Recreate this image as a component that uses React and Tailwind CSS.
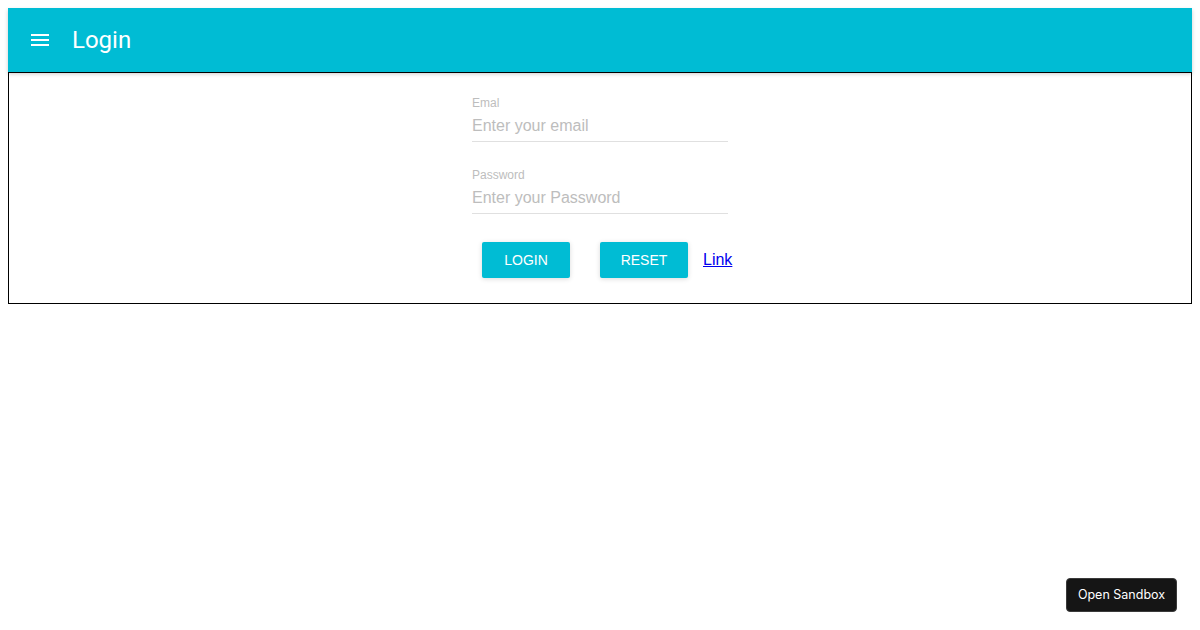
import React from "react";

export default function App() {
  return (
    <div className="min-h-[630px] bg-white p-2 relative">
      <header className="h-16 bg-[#00bcd4] flex items-center px-5 shadow-[0_2px_4px_rgba(0,0,0,0.2)] relative z-10">
        <svg width="24" height="24" viewBox="0 0 24 24" className="fill-white">
          <path d="M3 18h18v-2H3v2zm0-5h18v-2H3v2zm0-7v2h18V6H3z" />
        </svg>
        <h1 className="ml-5 text-white text-[24px] font-normal font-['Roboto',sans-serif] leading-none">Login</h1>
      </header>
      <div className="border border-black h-[232px] font-['Liberation_Sans',Arial,sans-serif]">
        <div className="w-64 mx-auto pt-[23px]">
          <div>
            <div className="text-[12px] text-[#bdbdbd] leading-[14px]">Emal</div>
            <input
              placeholder="Enter your email"
              className="w-full h-[32px] text-[16px] text-[#333] placeholder:text-[#bdbdbd] border-b border-[#e0e0e0] outline-none bg-transparent"
            />
          </div>
          <div className="mt-[26px]">
            <div className="text-[12px] text-[#bdbdbd] leading-[14px]">Password</div>
            <input
              placeholder="Enter your Password"
              type="password"
              className="w-full h-[32px] text-[16px] text-[#333] placeholder:text-[#bdbdbd] border-b border-[#e0e0e0] outline-none bg-transparent"
            />
          </div>
          <div className="flex items-center mt-[28px] pl-[10px]">
            <button className="shrink-0 w-[88px] h-9 bg-[#00bcd4] text-white text-[14px] rounded-[2px] shadow-[0_1px_5px_rgba(0,0,0,0.15)]">LOGIN</button>
            <button className="shrink-0 ml-[30px] w-[88px] h-9 bg-[#00bcd4] text-white text-[14px] rounded-[2px] shadow-[0_1px_5px_rgba(0,0,0,0.15)]">RESET</button>
            <a href="#" className="shrink-0 ml-[15px] text-[16px] text-[#0000ee] underline">Link</a>
          </div>
        </div>
      </div>
      <div className="absolute right-[23px] bottom-[18px] h-[34px] w-[111px] bg-[#151515] rounded-[4px] border border-[#3a3a3a] flex items-center justify-center text-white text-[12.5px] font-['Inter',sans-serif]">
        Open Sandbox
      </div>
    </div>
  );
}
